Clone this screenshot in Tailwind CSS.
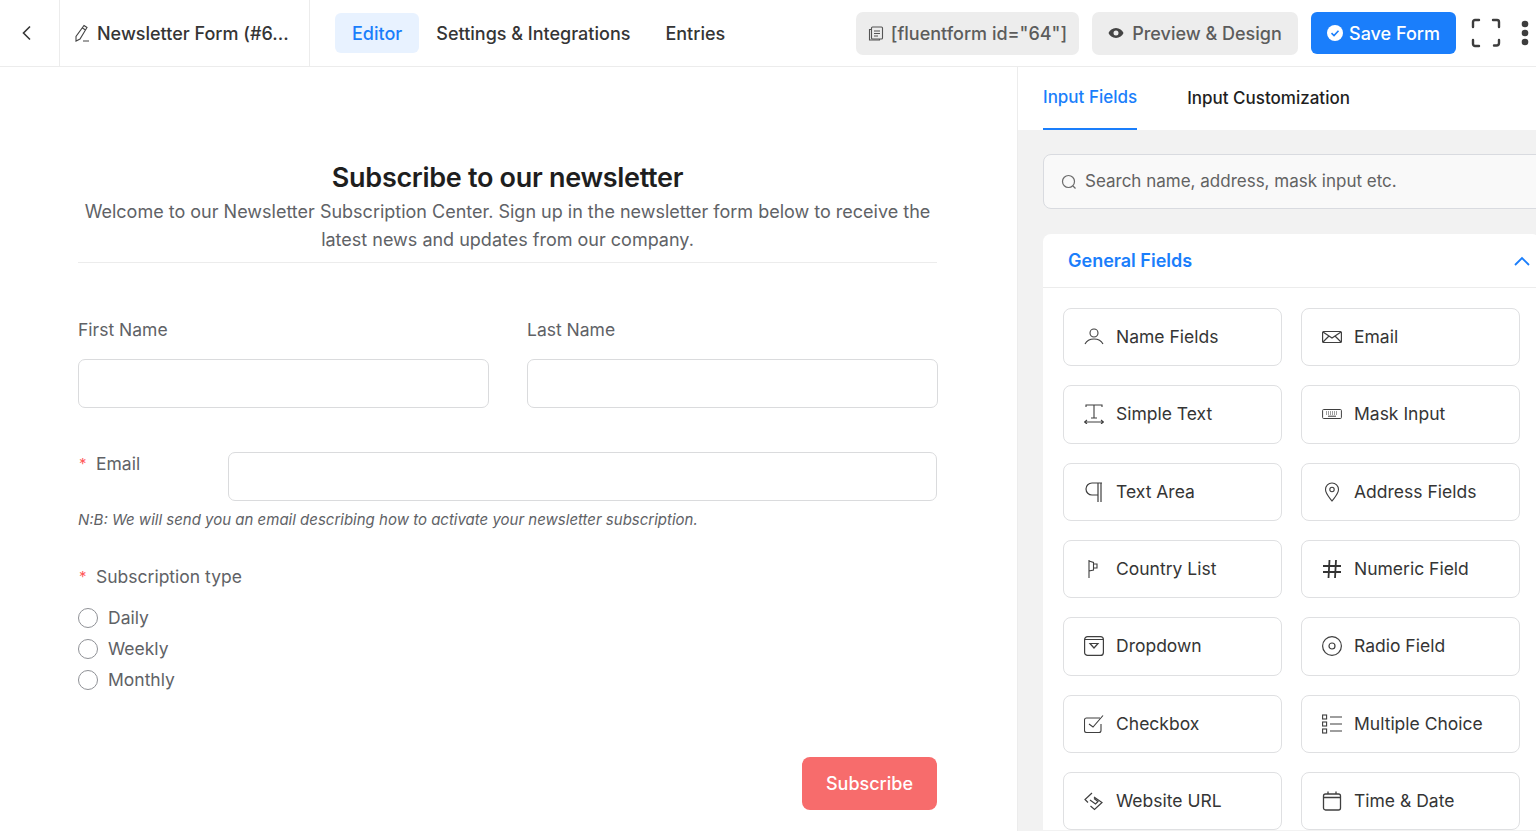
<!DOCTYPE html>
<html lang="en">
<head>
<meta charset="utf-8">
<title>Newsletter Form</title>
<script src="https://cdn.jsdelivr.net/npm/@tailwindcss/browser@4"></script>
</head>
<body class="w-[1536px] h-[831px] overflow-hidden bg-white font-['Inter',sans-serif] text-[#353535]">
<header class="h-[67px] flex items-center border-b border-[#ececec] text-[18px]">
  <div class="w-[60px] h-full flex items-center justify-center border-r border-[#ececec] pr-[6px]">
    <svg width="12" height="16" viewBox="0 0 12 16" fill="none" stroke="#353535" stroke-width="1.6"><path d="M9 1.5 2.5 8 9 14.5"/></svg>
  </div>
  <div class="w-[250px] h-full flex items-center border-r border-[#ececec] pl-[13px] gap-[6px]">
    <svg width="18" height="18" viewBox="0 0 18 18" fill="none" stroke="#444" stroke-width="1.1"><path d="M11 1.5 14 3.5 7 15 3 17 3 12.5ZM9.5 4 12.5 6M10 17h6"/></svg>
    <span class="font-medium whitespace-nowrap">Newsletter Form (#6...</span>
  </div>
  <nav class="flex items-center ml-[25px] font-medium">
    <span class="h-[40px] px-[17px] flex items-center rounded-[6px] bg-[#e8f2ff] text-[#1a7efb]">Editor</span>
    <span class="ml-[17px] whitespace-nowrap">Settings &amp; Integrations</span>
    <span class="ml-[35px]">Entries</span>
  </nav>
  <div class="flex items-center ml-auto">
    <span class="w-[223px] h-[43px] flex items-center justify-center gap-[7px] rounded-[7px] bg-[#ededed] text-[#5c5c5c] font-medium whitespace-nowrap">
      <svg width="16" height="16" viewBox="0 0 16 16" fill="none" stroke="#555" stroke-width="1.1"><rect x="3.5" y="2" width="11" height="12" rx="1"/><path d="M3.5 4.5H1.5V15H11.5V14M6 6h6M6 8.5h6M6 11h4"/></svg>
      [fluentform id="64"]
    </span>
    <span class="ml-[13px] w-[206px] h-[43px] flex items-center justify-center gap-[8px] rounded-[7px] bg-[#ededed] text-[#5c5c5c] font-medium whitespace-nowrap">
      <svg width="16" height="12" viewBox="0 0 16 12"><path fill="#444" fill-rule="evenodd" d="M8 1C4.5 1 1.7 3.2.5 6c1.2 2.8 4 5 7.5 5s6.300-2.200 7.500-5C14.300 3.200 11.500 1 8 1Zm0 7.500a2.500 2.500 0 1 1 0-5 2.500 2.500 0 0 1 0 5Z"/></svg>
      Preview &amp; Design
    </span>
    <span class="ml-[13px] w-[145px] h-[42px] flex items-center justify-center gap-[6px] rounded-[6px] bg-[#1a7efb] text-white font-medium whitespace-nowrap">
      <svg width="16" height="16" viewBox="0 0 16 16"><circle cx="8" cy="8" r="8" fill="#fff"/><path d="M4.500 8.200 7 10.500 11.500 5.700" fill="none" stroke="#1a7efb" stroke-width="1.6"/></svg>
      Save Form
    </span>
    <svg class="ml-[15px]" width="30" height="30" viewBox="0 0 30 30" fill="none" stroke="#3d3d3d" stroke-width="2.400" stroke-linecap="round"><path d="M2 9V4a2 2 0 0 1 2-2h4M22 2h4a2 2 0 0 1 2 2v5M28 22v3a2.500 2.500 0 0 1-2.500 2.500H23M8 28H4a2 2 0 0 1-2-2v-4"/></svg>
    <svg class="ml-[20px] mr-[7px]" width="8" height="26" viewBox="0 0 8 26" fill="#3d3d3d"><circle cx="4" cy="4" r="3.300"/><circle cx="4" cy="13" r="3.300"/><circle cx="4" cy="22" r="3.300"/></svg>
  </div>
</header>

<div class="flex h-[764px] overflow-hidden">
  <main class="w-[1018px] shrink-0 pl-[78px] pr-[80px] pt-[94px] border-r border-[#ececec]">
    <div class="border-b border-[#ececec] pb-[8px] text-center">
      <h1 class="text-[27px] leading-[34px] font-semibold text-[#1e1e1e] tracking-[-0.3px]">Subscribe to our newsletter</h1>
      <p class="mt-[3px] text-[18px] leading-[28px] text-[#606266]">Welcome to our Newsletter Subscription Center. Sign up in the newsletter form below to receive the latest news and updates from our company.</p>
    </div>

    <div class="mt-[55px] grid grid-cols-[411px_411px] gap-x-[38px] text-[#606266] text-[17.500px]">
      <div>
        <label class="block leading-[24px]">First Name</label>
        <div class="mt-[17px] h-[49px] rounded-[7px] border border-[#dadbdd]"></div>
      </div>
      <div>
        <label class="block leading-[24px]">Last Name</label>
        <div class="mt-[17px] h-[49px] rounded-[7px] border border-[#dadbdd]"></div>
      </div>
    </div>

    <div class="mt-[44px] flex items-start text-[#606266] text-[17.500px]">
      <label class="w-[150px] shrink-0 flex leading-[24px] pt-[-1px]"><span class="w-[18px] text-[#ff5a5a] text-[15px] pl-[1px]">*</span>Email</label>
      <div class="w-[710px] h-[49px] rounded-[7px] border border-[#dadbdd]"></div>
    </div>
    <p class="mt-[8px] text-[15px] leading-[22px] italic text-[#606266]">N:B: We will send you an email describing how to activate your newsletter subscription.</p>

    <div class="mt-[34px] flex leading-[24px] text-[#606266] text-[17.500px]"><span class="w-[18px] text-[#ff5a5a] text-[15px] pl-[1px]">*</span>Subscription type</div>

    <div class="mt-[17px] flex flex-col gap-[7px] text-[#606266] text-[17.500px]">
      <div class="flex items-center gap-[10px] h-[24px]"><span class="w-[20px] h-[20px] rounded-full border-[1.500px] border-[#8f9196]"></span>Daily</div>
      <div class="flex items-center gap-[10px] h-[24px]"><span class="w-[20px] h-[20px] rounded-full border-[1.500px] border-[#8f9196]"></span>Weekly</div>
      <div class="flex items-center gap-[10px] h-[24px]"><span class="w-[20px] h-[20px] rounded-full border-[1.500px] border-[#8f9196]"></span>Monthly</div>
    </div>

    <div class="mt-[65px] flex justify-end">
      <button class="w-[135px] h-[53px] rounded-[8px] bg-[#f76c6c] text-white text-[18px] font-medium">Subscribe</button>
    </div>
  </main>

  <aside class="w-[518px] shrink-0 overflow-hidden bg-[#f2f2f2]">
    <div class="h-[63px] bg-white flex pl-[25px] gap-[50px] text-[17px] font-medium">
      <span class="h-full flex items-center border-b-2 border-[#1a7efb] text-[#1a7efb]">Input Fields</span>
      <span class="h-full flex items-center text-[#1e1e1e]">Input Customization</span>
    </div>
    <div class="pl-[25px] pt-[24px] w-[540px]">
      <div class="h-[55px] rounded-[8px] border border-[#d9dbe0] bg-[#f9f9f9] flex items-center pl-[17px] gap-[8px] text-[17px] text-[#626262]">
        <svg width="16" height="16" viewBox="0 0 16 16" fill="none" stroke="#6b6b6b" stroke-width="1.200"><circle cx="7.500" cy="7.500" r="6"/><path d="m12 12 2.500 2.500"/></svg>
        Search name, address, mask input etc.
      </div>
      <section class="mt-[25px] w-[497px] rounded-t-[8px] bg-white">
        <div class="h-[54px] flex items-center justify-between pl-[25px] pr-[10px] border-b border-[#ececec]">
          <span class="text-[18px] font-semibold text-[#1a7efb]">General Fields</span>
          <svg width="16" height="10" viewBox="0 0 16 10" fill="none" stroke="#1a7efb" stroke-width="1.800"><path d="m1 9 7-7 7 7"/></svg>
        </div>
        <div class="pl-[20px] pt-[20px] grid grid-cols-[219px_219px] auto-rows-[58.330px] gap-x-[19px] gap-y-[19px] text-[17.500px] text-[#353535]">
          <div class="flex items-center gap-[12px] pl-[20px] rounded-[8px] border border-[#dfe0e2]"><svg class="shrink-0" width="20" height="20" viewBox="0 0 20 20" fill="none" stroke="#3f3f3f" stroke-width="1.100"><circle cx="10" cy="6" r="4"/><path d="M1 17c2-4 5.500-5 9-5s7 1 9 5"/></svg>Name Fields</div>
          <div class="flex items-center gap-[12px] pl-[20px] rounded-[8px] border border-[#dfe0e2]"><svg class="shrink-0" width="20" height="20" viewBox="0 0 20 20" fill="none" stroke="#3f3f3f" stroke-width="1.200"><rect x=".6" y="4.500" width="18.800" height="11" rx="1"/><path d="m1 5 9 6 9-6M1 15l6-6M19 15l-6-6"/></svg>Email</div>

          <div class="flex items-center gap-[12px] pl-[20px] rounded-[8px] border border-[#dfe0e2]"><svg class="shrink-0" width="20" height="20" viewBox="0 0 20 20" fill="none" stroke="#3f3f3f" stroke-width="1.100"><path d="M2 3V1h16v2M10 1v13M7 14h6M0.500 18h19M3 16l-2.500 2L3 20M17 16l2.500 2L17 20"/></svg>Simple Text</div>
          <div class="flex items-center gap-[12px] pl-[20px] rounded-[8px] border border-[#dfe0e2]"><svg class="shrink-0" width="20" height="20" viewBox="0 0 20 20" fill="none" stroke="#3f3f3f" stroke-width="1"><rect x=".6" y="5.500" width="18.800" height="9" rx="1"/><path d="M4 8h12M4 10h12" stroke-dasharray="1 1"/><path d="M6 12.200h8"/></svg>Mask Input</div>

          <div class="flex items-center gap-[12px] pl-[20px] rounded-[8px] border border-[#dfe0e2]"><svg class="shrink-0" width="20" height="20" viewBox="0 0 20 20" fill="none" stroke="#3f3f3f" stroke-width="1.200"><path d="M18 1H8a6 6 0 0 0 0 12h6M14 1v19M17 1v19"/></svg>Text Area</div>
          <div class="flex items-center gap-[12px] pl-[20px] rounded-[8px] border border-[#dfe0e2]"><svg class="shrink-0" width="20" height="20" viewBox="0 0 20 20" fill="none" stroke="#3f3f3f" stroke-width="1.100"><path d="M10 19C7 15 3.500 11.500 3.500 7.500a6.500 6.500 0 0 1 13 0C16.500 11.500 13 15 10 19Z"/><circle cx="10" cy="7.500" r="2.200"/></svg>Address Fields</div>

          <div class="flex items-center gap-[12px] pl-[20px] rounded-[8px] border border-[#dfe0e2]"><svg class="shrink-0" width="20" height="20" viewBox="0 0 20 20" fill="none" stroke="#3f3f3f" stroke-width="1.100"><path d="M5 1v18M5 2l4.500 1.500V5H13v4H9.500V11L5 12M9.500 5v4"/></svg>Country List</div>
          <div class="flex items-center gap-[12px] pl-[20px] rounded-[8px] border border-[#dfe0e2]"><svg class="shrink-0" width="20" height="20" viewBox="0 0 20 20" fill="none" stroke="#333" stroke-width="1.800"><path d="M1 7h18M1 13h18M7.500 1 6.500 19M14 1l-1 18"/></svg>Numeric Field</div>

          <div class="flex items-center gap-[12px] pl-[20px] rounded-[8px] border border-[#dfe0e2]"><svg class="shrink-0" width="20" height="20" viewBox="0 0 20 20" fill="none" stroke="#3f3f3f" stroke-width="1.200"><rect x=".6" y=".6" width="18.800" height="18.800" rx="3"/><path d="M1 3.500h18M6 7.500h8L10 12Z"/></svg>Dropdown</div>
          <div class="flex items-center gap-[12px] pl-[20px] rounded-[8px] border border-[#dfe0e2]"><svg class="shrink-0" width="20" height="20" viewBox="0 0 20 20" fill="none" stroke="#3f3f3f" stroke-width="1.200"><circle cx="10" cy="10" r="9.400"/><circle cx="10" cy="10" r="3"/></svg>Radio Field</div>

          <div class="flex items-center gap-[12px] pl-[20px] rounded-[8px] border border-[#dfe0e2]"><svg class="shrink-0" width="20" height="20" viewBox="0 0 20 20" fill="none" stroke="#3f3f3f" stroke-width="1.100"><path d="M16 4H2.500a2 2 0 0 0-2 2v10.500a2 2 0 0 0 2 2H15a2 2 0 0 0 2-2V10"/><path d="m5 10 4 3L19 1.500"/></svg>Checkbox</div>
          <div class="flex items-center gap-[12px] pl-[20px] rounded-[8px] border border-[#dfe0e2]"><svg class="shrink-0" width="20" height="20" viewBox="0 0 20 20" fill="none" stroke="#3f3f3f" stroke-width="1.100"><rect x=".6" y="1" width="4" height="4"/><rect x=".6" y="8" width="4" height="4"/><rect x=".6" y="15" width="4" height="4"/><path d="M8 3h12M8 10h12M8 17h12"/></svg>Multiple Choice</div>

          <div class="flex items-center gap-[12px] pl-[20px] rounded-[8px] border border-[#dfe0e2]"><svg class="shrink-0" width="20" height="20" viewBox="0 0 20 20" fill="none" stroke="#3f3f3f" stroke-width="1.200"><path d="M8 2 1 8.500l3 3M10 6l8 5.500-7.500 7-4-3.500M6 9l5.500 4 2.500-2.500-4-3"/></svg>Website URL</div>
          <div class="flex items-center gap-[12px] pl-[20px] rounded-[8px] border border-[#dfe0e2]"><svg class="shrink-0" width="20" height="20" viewBox="0 0 20 20" fill="none" stroke="#3f3f3f" stroke-width="1.300"><rect x="1.500" y="3" width="17" height="16" rx="2"/><path d="M1.500 6.500h17M6 .5V3M14 .5V3"/></svg>Time &amp; Date</div>
        </div>
      </section>
    </div>
  </aside>
</div>
</body>
</html>
